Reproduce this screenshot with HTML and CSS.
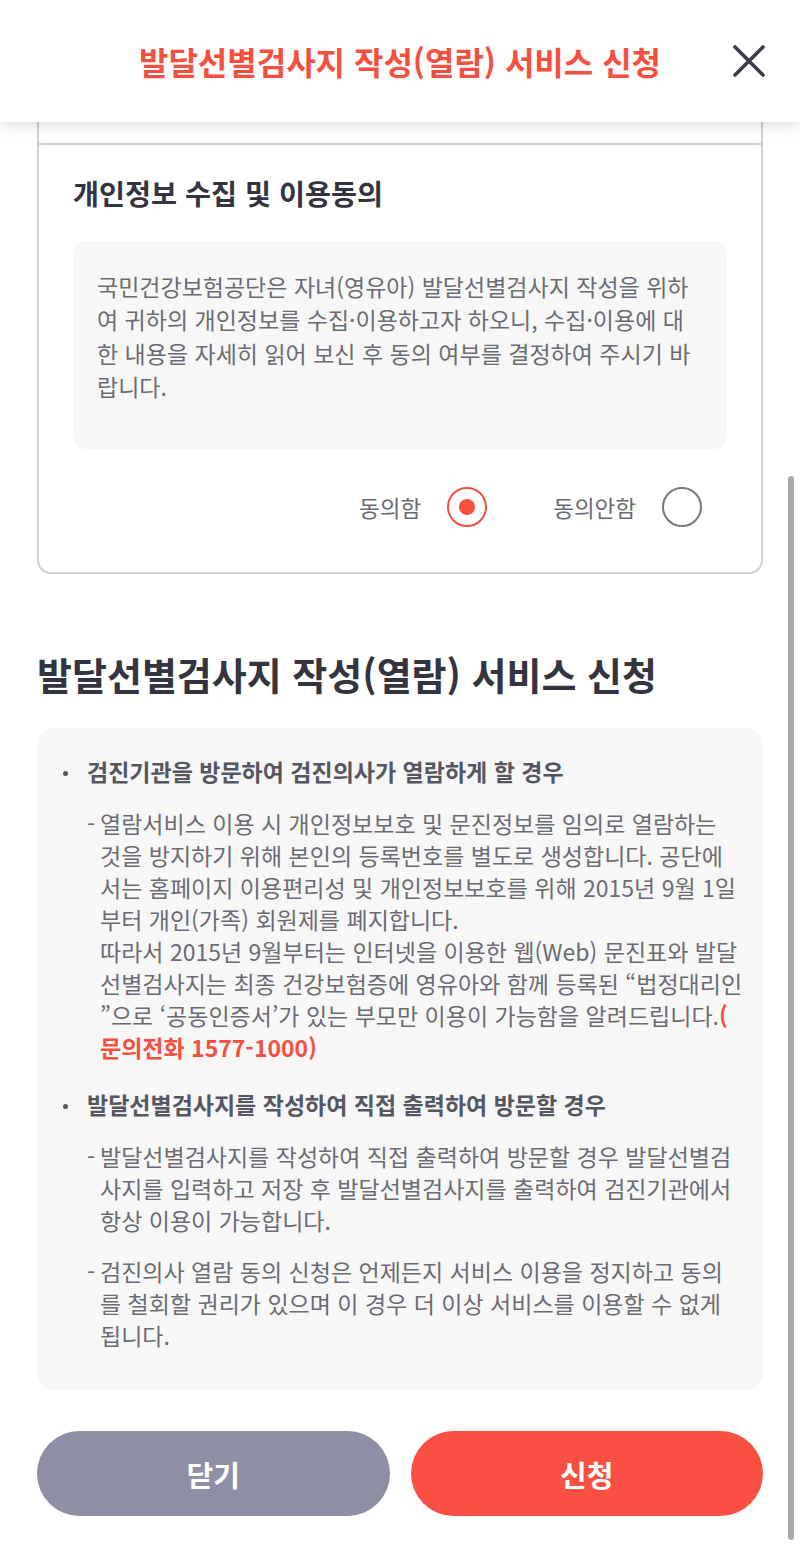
FILE: index.html
```html
<!DOCTYPE html>
<html lang="ko">
<head>
<meta charset="utf-8">
<title>발달선별검사지 작성(열람) 서비스 신청</title>
<link rel="stylesheet" href="styles.css">
</head>
<body>
<header class="topbar">
  <h1 class="topbar-title">발달선별검사지 작성(열람) 서비스 신청</h1>
  <button class="close-btn" type="button" aria-label="닫기">
    <svg width="36" height="36" viewBox="0 0 36 36"><path d="M4 4 L32 32 M32 4 L4 32" stroke="#3c3c4a" stroke-width="3.6" stroke-linecap="round" fill="none"/></svg>
  </button>
</header>

<main class="content">
  <section class="card">
    <div class="card-prev"></div>
    <div class="consent">
      <h2 class="consent-title">개인정보 수집 및 이용동의</h2>
      <div class="consent-box">
        <p>국민건강보험공단은 자녀(영유아) 발달선별검사지 작성을 위하<br>여 귀하의 개인정보를 수집·이용하고자 하오니, 수집·이용에 대<br>한 내용을 자세히 읽어 보신 후 동의 여부를 결정하여 주시기 바<br>랍니다.</p>
      </div>
      <div class="radio-row">
        <label class="radio-item"><span class="radio-label">동의함</span><span class="radio checked"></span></label>
        <label class="radio-item"><span class="radio-label">동의안함</span><span class="radio"></span></label>
      </div>
    </div>
  </section>

  <h2 class="section-title">발달선별검사지 작성(열람) 서비스 신청</h2>

  <div class="info-box">
    <div class="bullet">
      <span class="dot"></span>
      <span class="bullet-text">검진기관을 방문하여 검진의사가 열람하게 할 경우</span>
    </div>
    <div class="dash-item">
      <span class="dash">-</span>
      <p>열람서비스 이용 시 개인정보보호 및 문진정보를 임의로 열람하는<br>것을 방지하기 위해 본인의 등록번호를 별도로 생성합니다. 공단에<br>서는 홈페이지 이용편리성 및 개인정보보호를 위해 2015년 9월 1일<br>부터 개인(가족) 회원제를 폐지합니다.<br>따라서 2015년 9월부터는 인터넷을 이용한 웹(Web) 문진표와 발달<br>선별검사지는 최종 건강보험증에 영유아와 함께 등록된 “법정대리인<br>”으로 ‘공동인증서’가 있는 부모만 이용이 가능함을 알려드립니다.<strong class="red">(<br>문의전화 1577-1000)</strong></p>
    </div>

    <div class="bullet second">
      <span class="dot"></span>
      <span class="bullet-text">발달선별검사지를 작성하여 직접 출력하여 방문할 경우</span>
    </div>
    <div class="dash-item">
      <span class="dash">-</span>
      <p>발달선별검사지를 작성하여 직접 출력하여 방문할 경우 발달선별검<br>사지를 입력하고 저장 후 발달선별검사지를 출력하여 검진기관에서<br>항상 이용이 가능합니다.</p>
    </div>
    <div class="dash-item">
      <span class="dash">-</span>
      <p>검진의사 열람 동의 신청은 언제든지 서비스 이용을 정지하고 동의<br>를 철회할 권리가 있으며 이 경우 더 이상 서비스를 이용할 수 없게<br>됩니다.</p>
    </div>
  </div>

  <div class="actions">
    <button class="btn btn-close" type="button">닫기</button>
    <button class="btn btn-apply" type="button">신청</button>
  </div>
</main>

<div class="scrollbar"></div>
</body>
</html>
```

FILE: styles.css
```css
* {
  box-sizing: border-box;
}

html, body {
  margin: 0;
  padding: 0;
  background: #ffffff;
}

body {
  width: 800px;
  height: 1551px;
  overflow: hidden;
  position: relative;
  font-family: "Noto Sans CJK KR", "Noto Sans", sans-serif;
  color: #33343f;
}

p, h1, h2 {
  margin: 0;
}

.topbar {
  position: relative;
  z-index: 2;
  height: 122px;
  background: #ffffff;
  display: flex;
  align-items: center;
  justify-content: center;
  box-shadow: 0 4px 14px rgba(0, 0, 0, 0.13);
}

.topbar-title {
  font-size: 32px;
  font-weight: 700;
  color: #f5503f;
  line-height: 42px;
}

.close-btn {
  position: absolute;
  right: 33px;
  top: 43px;
  width: 36px;
  height: 36px;
  padding: 0;
  border: 0;
  background: transparent;
  display: flex;
}

.content {
  padding: 0 37px 36px;
}

.card {
  margin-top: -20px;
  border: 2px solid #c9d1dc;
  border-radius: 14px;
}

.card-prev {
  height: 41px;
  border-bottom: 2px solid #c9d1dc;
}

.consent {
  padding: 28px 34px 45px;
}

.consent-title {
  font-size: 28.3px;
  font-weight: 700;
  line-height: 40px;
  color: #33343f;
}

.consent-box {
  margin-top: 28px;
  background: #f7f7f8;
  border-radius: 12px;
  padding: 29px 20px 44px 24px;
  height: 208px;
}

.consent-box p {
  font-size: 23px;
  line-height: 33.4px;
  color: #6b6b73;
  white-space: nowrap;
}

.radio-row {
  margin-top: 38px;
  display: flex;
  justify-content: flex-end;
  gap: 66px;
  padding-right: 25px;
}

.radio-item {
  display: flex;
  align-items: center;
  gap: 26px;
}

.radio-label {
  font-size: 22.5px;
  line-height: 40px;
  color: #6b6b73;
}

.radio {
  width: 40px;
  height: 40px;
  border-radius: 50%;
  border: 2px solid #77777f;
  display: flex;
  align-items: center;
  justify-content: center;
}

.radio.checked {
  border-color: #f5503f;
}

.radio.checked::after {
  content: "";
  width: 16px;
  height: 16px;
  border-radius: 50%;
  background: #f5503f;
}

.section-title {
  margin-top: 76px;
  font-size: 38px;
  font-weight: 700;
  line-height: 48px;
  color: #33343f;
}

.info-box {
  margin-top: 30px;
  background: #f7f7f8;
  border-radius: 16px;
  padding: 27px 20px 39px 26px;
}

.bullet {
  display: flex;
  align-items: center;
  line-height: 32px;
}

.bullet.second {
  margin-top: 25px;
}

.dot {
  width: 5px;
  height: 5px;
  border-radius: 50%;
  background: #55565f;
  margin-right: 19px;
  margin-top: 4px;
}

.bullet-text {
  font-size: 23px;
  font-weight: 700;
  color: #55565f;
}

.dash-item {
  display: flex;
  margin-top: 20px;
  padding-left: 24px;
  font-size: 23px;
  line-height: 32px;
  color: #6b6b73;
}

.dash-item + .dash-item {
  margin-top: 19px;
}

.dash {
  width: 13px;
  flex: none;
}

.dash-item p {
  white-space: nowrap;
}

.red {
  color: #f5503f;
  font-weight: 700;
}

.actions {
  margin-top: 41px;
  display: flex;
  gap: 21px;
}

.btn {
  flex: 1;
  height: 85px;
  border: 0;
  border-radius: 43px;
  font-family: inherit;
  font-size: 29px;
  font-weight: 700;
  color: #ffffff;
}

.btn-close {
  background: #8e8ea5;
}

.btn-apply {
  background: #fa5043;
}

.scrollbar {
  position: absolute;
  right: 6px;
  top: 476px;
  width: 6px;
  height: 1064px;
  border-radius: 3px;
  background: #a9a9a9;
}
```
